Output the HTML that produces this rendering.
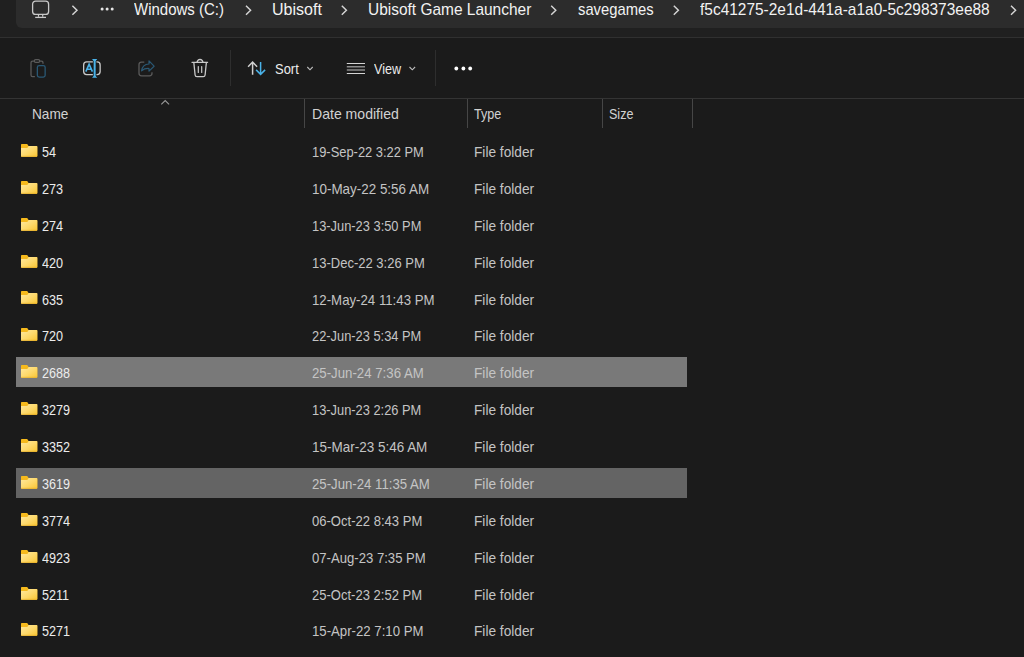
<!DOCTYPE html>
<html><head><meta charset="utf-8"><style>
html,body{margin:0;padding:0;}
body{width:1024px;height:657px;overflow:hidden;background:#1b1b1b;position:relative;font-family:"Liberation Sans",sans-serif;}
.a{position:absolute;white-space:pre;transform-origin:0 0;}
#top{position:absolute;left:0;top:0;width:1024px;height:37px;background:#202020;}
#addr{position:absolute;left:16px;top:-6px;width:1020px;height:34px;background:#2c2c2c;border-radius:6px;}
#sep1{position:absolute;left:0;top:37px;width:1024px;height:1px;background:#303030;}
.bc{font-size:16.4px;color:#f2f2f2;line-height:20px;}
.tb{font-size:14.5px;color:#ececec;line-height:18px;}
.vsep{position:absolute;width:1px;background:#2e2e2e;}
#hline{position:absolute;left:0;top:98px;width:1024px;height:1px;background:#343434;}
.hd{font-size:14.5px;color:#d2d2d2;line-height:18px;}
.colsep{position:absolute;top:99px;width:1px;height:29px;background:#464646;}
.sel{position:absolute;left:16px;width:671px;height:30px;}
.nm{font-size:14.5px;color:#ececec;line-height:18px;}
.dt{font-size:14.5px;color:#c4c4c4;line-height:18px;}
.fold{position:absolute;left:20.5px;width:16.3px;height:12.8px;overflow:visible;}
</style></head><body>
<div id="top"></div><div id="addr"></div><div id="sep1"></div>
<div class="a bc" style="left:134px;top:-1.2px;transform:scaleX(0.9153);">Windows (C:)</div>
<div class="a bc" style="left:271.5px;top:-1.2px;transform:scaleX(0.9775);">Ubisoft</div>
<div class="a bc" style="left:368px;top:-1.2px;transform:scaleX(0.9433);">Ubisoft Game Launcher</div>
<div class="a bc" style="left:577.5px;top:-1.2px;transform:scaleX(0.9018);">savegames</div>
<div class="a bc" style="left:699.7px;top:-1.2px;transform:scaleX(0.9433);">f5c41275-2e1d-441a-a1a0-5c298373ee88</div>
<svg class="a" style="left:0;top:0" width="1024" height="657" viewBox="0 0 1024 657"><rect x="32.6" y="1.2" width="16" height="13.2" rx="3" fill="none" stroke="#c9c9c9" stroke-width="1.3"/><path d="M38.5 14.5 V16.8 M42.7 14.5 V16.8" stroke="#c9c9c9" stroke-width="1.2"/><path d="M35.2 17.4 H46" stroke="#c9c9c9" stroke-width="1.3"/><path d="M72.40 5.8 L77.00 10.25 L72.40 14.7" fill="none" stroke="#d6d6d6" stroke-width="1.45"/><path d="M246.00 5.8 L250.60 10.25 L246.00 14.7" fill="none" stroke="#d6d6d6" stroke-width="1.45"/><path d="M341.80 5.8 L346.40 10.25 L341.80 14.7" fill="none" stroke="#d6d6d6" stroke-width="1.45"/><path d="M551.20 5.8 L555.80 10.25 L551.20 14.7" fill="none" stroke="#d6d6d6" stroke-width="1.45"/><path d="M673.80 5.8 L678.40 10.25 L673.80 14.7" fill="none" stroke="#d6d6d6" stroke-width="1.45"/><path d="M1011.00 5.8 L1015.60 10.25 L1011.00 14.7" fill="none" stroke="#d6d6d6" stroke-width="1.45"/><circle cx="102.1" cy="9" r="1.5" fill="#e6e6e6"/><circle cx="107.1" cy="9" r="1.5" fill="#e6e6e6"/><circle cx="112.2" cy="9" r="1.5" fill="#e6e6e6"/><path d="M34.9 76.6 H32.6 Q31 76.6 31 75 V62.7 Q31 61.1 32.6 61.1 H34 M40 61.1 H41.4 Q43 61.1 43 62.7 V63.8" fill="none" stroke="#5a5a5a" stroke-width="1.3"/><rect x="34.3" y="59.6" width="5.4" height="2.7" rx="1.3" fill="none" stroke="#5a5a5a" stroke-width="1.2"/><rect x="37.35" y="65.55" width="7.8" height="11.6" rx="1.8" fill="none" stroke="#2a5874" stroke-width="1.3"/><rect x="83.65" y="61.95" width="16.5" height="12.6" rx="3" fill="none" stroke="#c9c9c9" stroke-width="1.3"/><path d="M94.65 59.5 V77" stroke="#1b1b1b" stroke-width="3.6"/><path d="M94.65 59.8 V77" stroke="#4ab2e8" stroke-width="2"/><path d="M92 59.1 H97.3 L95.6 60.9 H93.7 Z M92 77.8 H97.3 L95.6 76 H93.7 Z" fill="#4ab2e8"/><path d="M85.8 71.7 L89.1 64.3 L92.4 71.7 M86.9 69.2 H91.3" fill="none" stroke="#4ab2e8" stroke-width="1.6"/><path d="M144.3 62.1 H141.5 Q139 62.1 139 64.6 V73.3 Q139 75.8 141.5 75.8 H149.5 Q152 75.8 152 73.3 V72.2" fill="none" stroke="#5a5a5a" stroke-width="1.3"/><path d="M149 60.9 L154.1 66.2 L149 71.1 V68.5 C145.8 68.3 143.4 69.2 141.6 70.8 C142.1 66.6 144.6 64.2 149 64 Z" fill="none" stroke="#2a5874" stroke-width="1.2" stroke-linejoin="round"/><path d="M192 62.3 H207.6" stroke="#c9c9c9" stroke-width="1.3" stroke-linecap="round"/><path d="M197 62.3 Q197.6 59.6 200 59.4 Q202.4 59.6 203 62.3" fill="none" stroke="#c9c9c9" stroke-width="1.3"/><path d="M193.8 62.3 L195.1 75 Q195.3 76.6 196.9 76.6 H203.3 Q204.9 76.6 205.1 75 L206.4 62.3" fill="none" stroke="#c9c9c9" stroke-width="1.3"/><path d="M198.3 66.6 V72.4 M201.7 66.6 V72.4" stroke="#c9c9c9" stroke-width="1.2" stroke-linecap="round"/><path d="M252.6 74.8 V62.2 M248.1 66.7 L252.6 62.1 L257.1 66.7" fill="none" stroke="#d0d0d0" stroke-width="1.5"/><path d="M260.6 62 V74.3 M256.1 69.9 L260.6 74.4 L265.1 69.9" fill="none" stroke="#4ab2e8" stroke-width="1.5"/><path d="M307.3 67 L310 69.8 L312.7 67" fill="none" stroke="#bdbdbd" stroke-width="1.1"/><path d="M346.8 63.5 H365 M346.8 73.5 H365" stroke="#d4d4d4" stroke-width="1.2"/><path d="M346.8 66.8 H365 M346.8 69.9 H365" stroke="#8c8c8c" stroke-width="1.5"/><path d="M409.5 67 L412.3 69.8 L415.1 67" fill="none" stroke="#bdbdbd" stroke-width="1.1"/><circle cx="456.3" cy="68.5" r="1.9" fill="#ffffff"/><circle cx="463.4" cy="68.5" r="1.9" fill="#ffffff"/><circle cx="470.2" cy="68.5" r="1.9" fill="#ffffff"/><path d="M161.3 104.3 L165.2 100.6 L169.1 104.3" fill="none" stroke="#9a9a9a" stroke-width="1.1"/></svg>
<div class="vsep" style="left:230px;top:50px;height:36px"></div>
<div class="vsep" style="left:435px;top:50px;height:36px"></div>
<div class="a tb" style="left:274.5px;top:60px;transform:scaleX(0.893);">Sort</div>
<div class="a tb" style="left:373.5px;top:60px;transform:scaleX(0.867);">View</div>
<div id="hline"></div>
<div class="colsep" style="left:304px"></div>
<div class="colsep" style="left:467px"></div>
<div class="colsep" style="left:602px"></div>
<div class="colsep" style="left:692px"></div>
<div class="a hd" style="left:32px;top:105px;transform:scaleX(0.94);">Name</div>
<div class="a hd" style="left:311.5px;top:105px;transform:scaleX(0.97);">Date modified</div>
<div class="a hd" style="left:474px;top:105px;transform:scaleX(0.87);">Type</div>
<div class="a hd" style="left:609px;top:105px;transform:scaleX(0.864);">Size</div>
<div class="sel" style="top:357px;background:#797979"></div>
<div class="sel" style="top:468px;background:#646464"></div>
<svg width="0" height="0" style="position:absolute"><defs>
<linearGradient id="fg" x1="0" y1="0" x2="1" y2="1"><stop offset="0" stop-color="#ffe9a0"/><stop offset="0.55" stop-color="#fdd869"/><stop offset="1" stop-color="#f9c533"/></linearGradient>
<linearGradient id="tg" x1="0" y1="0" x2="0" y2="1"><stop offset="0" stop-color="#f7bb1c"/><stop offset="1" stop-color="#eeb020"/></linearGradient>
<g id="fd"><path d="M0 0.8 Q0 0 0.8 0 H6.2 L7.6 1.9 H15.5 Q16.3 1.9 16.3 2.7 V12 Q16.3 12.8 15.5 12.8 H0.8 Q0 12.8 0 12 Z" fill="url(#tg)"/>
<path d="M0 3.9 H6.3 L7.7 1.9 H15.6 Q16.3 1.9 16.3 2.7 V12 Q16.3 12.8 15.5 12.8 H0.8 Q0 12.8 0 12 Z" fill="url(#fg)"/>
<path d="M0.3 12.3 H16" stroke="#eab02a" stroke-width="0.8" opacity="0.7"/></g></defs></svg>
<svg class="fold" style="top:143.95px" viewBox="0 0 16.3 12.8"><use href="#fd"/></svg>
<div class="a nm" style="left:42.4px;top:143.05px;transform:scaleX(0.87);">54</div>
<div class="a dt" style="left:311.8px;top:143.05px;transform:scaleX(0.8896);">19-Sep-22 3:22 PM</div>
<div class="a dt" style="left:474px;top:143.05px;transform:scaleX(0.943);">File folder</div>
<svg class="fold" style="top:180.83px" viewBox="0 0 16.3 12.8"><use href="#fd"/></svg>
<div class="a nm" style="left:42.4px;top:179.93px;transform:scaleX(0.87);">273</div>
<div class="a dt" style="left:311.8px;top:179.93px;transform:scaleX(0.9256);">10-May-22 5:56 AM</div>
<div class="a dt" style="left:474px;top:179.93px;transform:scaleX(0.943);">File folder</div>
<svg class="fold" style="top:217.71px" viewBox="0 0 16.3 12.8"><use href="#fd"/></svg>
<div class="a nm" style="left:42.4px;top:216.81px;transform:scaleX(0.87);">274</div>
<div class="a dt" style="left:311.8px;top:216.81px;transform:scaleX(0.8869);">13-Jun-23 3:50 PM</div>
<div class="a dt" style="left:474px;top:216.81px;transform:scaleX(0.943);">File folder</div>
<svg class="fold" style="top:254.59px" viewBox="0 0 16.3 12.8"><use href="#fd"/></svg>
<div class="a nm" style="left:42.4px;top:253.69px;transform:scaleX(0.87);">420</div>
<div class="a dt" style="left:311.8px;top:253.69px;transform:scaleX(0.8968);">13-Dec-22 3:26 PM</div>
<div class="a dt" style="left:474px;top:253.69px;transform:scaleX(0.943);">File folder</div>
<svg class="fold" style="top:291.47px" viewBox="0 0 16.3 12.8"><use href="#fd"/></svg>
<div class="a nm" style="left:42.4px;top:290.57px;transform:scaleX(0.87);">635</div>
<div class="a dt" style="left:311.8px;top:290.57px;transform:scaleX(0.912);">12-May-24 11:43 PM</div>
<div class="a dt" style="left:474px;top:290.57px;transform:scaleX(0.943);">File folder</div>
<svg class="fold" style="top:328.35px" viewBox="0 0 16.3 12.8"><use href="#fd"/></svg>
<div class="a nm" style="left:42.4px;top:327.45px;transform:scaleX(0.87);">720</div>
<div class="a dt" style="left:311.8px;top:327.45px;transform:scaleX(0.8861);">22-Jun-23 5:34 PM</div>
<div class="a dt" style="left:474px;top:327.45px;transform:scaleX(0.943);">File folder</div>
<svg class="fold" style="top:365.23px" viewBox="0 0 16.3 12.8"><use href="#fd"/></svg>
<div class="a nm" style="left:42.4px;top:364.33px;transform:scaleX(0.87);">2688</div>
<div class="a dt" style="left:311.8px;top:364.33px;transform:scaleX(0.9124);">25-Jun-24 7:36 AM</div>
<div class="a dt" style="left:474px;top:364.33px;transform:scaleX(0.943);">File folder</div>
<svg class="fold" style="top:402.11px" viewBox="0 0 16.3 12.8"><use href="#fd"/></svg>
<div class="a nm" style="left:42.4px;top:401.21px;transform:scaleX(0.87);">3279</div>
<div class="a dt" style="left:311.8px;top:401.21px;transform:scaleX(0.8861);">13-Jun-23 2:26 PM</div>
<div class="a dt" style="left:474px;top:401.21px;transform:scaleX(0.943);">File folder</div>
<svg class="fold" style="top:438.99px" viewBox="0 0 16.3 12.8"><use href="#fd"/></svg>
<div class="a nm" style="left:42.4px;top:438.09px;transform:scaleX(0.87);">3352</div>
<div class="a dt" style="left:311.8px;top:438.09px;transform:scaleX(0.9293);">15-Mar-23 5:46 AM</div>
<div class="a dt" style="left:474px;top:438.09px;transform:scaleX(0.943);">File folder</div>
<svg class="fold" style="top:475.87px" viewBox="0 0 16.3 12.8"><use href="#fd"/></svg>
<div class="a nm" style="left:42.4px;top:474.97px;transform:scaleX(0.87);">3619</div>
<div class="a dt" style="left:311.8px;top:474.97px;transform:scaleX(0.9101);">25-Jun-24 11:35 AM</div>
<div class="a dt" style="left:474px;top:474.97px;transform:scaleX(0.943);">File folder</div>
<svg class="fold" style="top:512.75px" viewBox="0 0 16.3 12.8"><use href="#fd"/></svg>
<div class="a nm" style="left:42.4px;top:511.85px;transform:scaleX(0.87);">3774</div>
<div class="a dt" style="left:311.8px;top:511.85px;transform:scaleX(0.9);">06-Oct-22 8:43 PM</div>
<div class="a dt" style="left:474px;top:511.85px;transform:scaleX(0.943);">File folder</div>
<svg class="fold" style="top:549.63px" viewBox="0 0 16.3 12.8"><use href="#fd"/></svg>
<div class="a nm" style="left:42.4px;top:548.73px;transform:scaleX(0.87);">4923</div>
<div class="a dt" style="left:311.8px;top:548.73px;transform:scaleX(0.9048);">07-Aug-23 7:35 PM</div>
<div class="a dt" style="left:474px;top:548.73px;transform:scaleX(0.943);">File folder</div>
<svg class="fold" style="top:586.51px" viewBox="0 0 16.3 12.8"><use href="#fd"/></svg>
<div class="a nm" style="left:42.4px;top:585.61px;transform:scaleX(0.87);">5211</div>
<div class="a dt" style="left:311.8px;top:585.61px;transform:scaleX(0.8984);">25-Oct-23 2:52 PM</div>
<div class="a dt" style="left:474px;top:585.61px;transform:scaleX(0.943);">File folder</div>
<svg class="fold" style="top:623.39px" viewBox="0 0 16.3 12.8"><use href="#fd"/></svg>
<div class="a nm" style="left:42.4px;top:622.49px;transform:scaleX(0.87);">5271</div>
<div class="a dt" style="left:311.8px;top:622.49px;transform:scaleX(0.9098);">15-Apr-22 7:10 PM</div>
<div class="a dt" style="left:474px;top:622.49px;transform:scaleX(0.943);">File folder</div>
</body></html>
